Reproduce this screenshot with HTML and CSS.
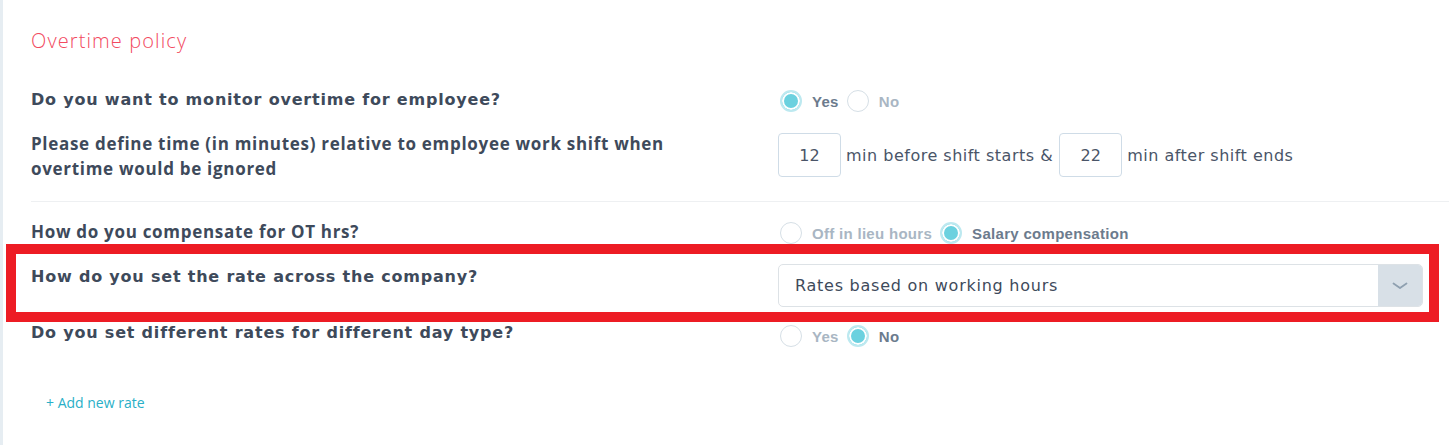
FILE: index.html
```html
<!DOCTYPE html>
<html lang="en">
<head>
<meta charset="utf-8">
<title>Overtime policy</title>
<link rel="stylesheet" href="styles.css">
</head>
<body>
<div class="page">
  <div class="strip"></div>
  <main class="panel">
    <h2 class="title">Overtime policy</h2>

    <div class="row row1">
      <div class="label">Do you want to monitor overtime for employee?</div>
      <div class="control radios">
        <span class="radio checked"></span><span class="rlabel on">Yes</span>
        <span class="radio"></span><span class="rlabel">No</span>
      </div>
    </div>

    <div class="row row2">
      <div class="label alt two">Please define time (in minutes) relative to employee work shift when overtime would be ignored</div>
      <div class="control inputs">
        <span class="box">12</span><span class="txt">min before shift starts &amp;</span>
        <span class="box">22</span><span class="txt">min after shift ends</span>
      </div>
    </div>

    <div class="sep"></div>

    <div class="row row3">
      <div class="label alt">How do you compensate for OT hrs?</div>
      <div class="control radios">
        <span class="radio"></span><span class="rlabel">Off in lieu hours</span>
        <span class="radio checked"></span><span class="rlabel on">Salary compensation</span>
      </div>
    </div>

    <div class="row row4">
      <div class="label top">How do you set the rate across the company?</div>
      <div class="control">
        <div class="select">
          <span class="seltext">Rates based on working hours</span>
          <span class="arrow"><svg width="16" height="8" viewBox="0 0 16 8"><path d="M1.5 1.5 L8 6 L14.5 1.5" fill="none" stroke="#8fa0b0" stroke-width="1.8" stroke-linecap="round" stroke-linejoin="round"/></svg></span>
        </div>
      </div>
      <div class="highlight"></div>
    </div>

    <div class="row row5">
      <div class="label">Do you set different rates for different day type?</div>
      <div class="control radios low">
        <span class="radio"></span><span class="rlabel">Yes</span>
        <span class="radio checked"></span><span class="rlabel on">No</span>
      </div>
    </div>

    <div class="add">+ Add new rate</div>
  </main>
</div>
</body>
</html>
```

FILE: styles.css
```css
html, body {
  margin: 0;
  padding: 0;
  background: #ffffff;
}
.page {
  display: flex;
  min-height: 445px;
}
.strip {
  width: 3px;
  background: #e6edf2;
  flex: none;
}
.panel {
  flex: 1;
  padding: 0 4px 0 28px;
  font-family: "DejaVu Sans", sans-serif;
  color: #3e4a5b;
}
.title {
  margin: 0;
  padding-top: 29px;
  font-family: "Open Sans", sans-serif;
  font-weight: 300;
  font-size: 20px;
  letter-spacing: 1.1px;
  line-height: 24px;
  color: #f24a60;
}
.row {
  position: relative;
  display: flex;
  align-items: center;
}
.label {
  width: 747px;
  flex: none;
  font-weight: bold;
  font-size: 16px;
  line-height: 24px;
  letter-spacing: 0.8px;
}
.label.alt {
  font-family: "Open Sans", sans-serif;
  font-weight: 700;
  font-size: 17px;
  letter-spacing: 0.7px;
}
.label.two {
  line-height: 25px;
  padding: 2px 80px 0 0;
  box-sizing: border-box;
}
.label.top {
  align-self: flex-start;
  padding-top: 1px;
}
.control {
  flex: 1;
  display: flex;
  align-items: center;
  padding-right: 26px;
}
.row1 {
  margin-top: 27px;
  height: 40px;
}
.row2 {
  margin-top: 10px;
  height: 50px;
}
.row3 {
  margin-top: 10px;
  height: 40px;
}
.row4 {
  margin-top: 12px;
  height: 43px;
}
.row5 {
  margin-top: 11px;
  height: 30px;
}
.radios {
  padding-left: 2px;
  padding-top: 2px;
}
.radios.low {
  padding-top: 6px;
}
.radio {
  width: 22px;
  height: 22px;
  box-sizing: border-box;
  border-radius: 50%;
  border: 1.5px solid #d6dfe6;
  background: #fff;
  flex: none;
}
.radio.checked {
  border: 2px solid #bde9f0;
  background: #6bd1df;
  box-shadow: inset 0 0 0 2px #ffffff;
}
.rlabel {
  font-family: "Liberation Sans", Arial, sans-serif;
  font-weight: bold;
  font-size: 15px;
  letter-spacing: 0.3px;
  color: #a9b6c3;
  margin: 0 8px 0 10px;
}
.rlabel.on {
  color: #6c7b8d;
}
.inputs .box {
  width: 63px;
  height: 44px;
  box-sizing: border-box;
  border: 1px solid #cfdce7;
  border-radius: 4px;
  display: flex;
  align-items: center;
  justify-content: center;
  font-size: 16px;
  color: #4a5568;
  flex: none;
}
.inputs .txt {
  font-size: 16px;
  letter-spacing: 0.5px;
  color: #4a5568;
  margin: 0 6px 0 5px;
}
.sep {
  margin-top: 21px;
  height: 1px;
  background: #eef0f2;
}
.select {
  flex: 1;
  height: 43px;
  box-sizing: border-box;
  border: 1px solid #dde2e6;
  border-radius: 5px;
  display: flex;
  align-items: center;
  overflow: hidden;
}
.seltext {
  flex: 1;
  padding-left: 16px;
  font-size: 16px;
  letter-spacing: 0.75px;
  color: #3e4a5b;
}
.arrow {
  width: 44px;
  height: 100%;
  background: #d8e0e7;
  display: flex;
  align-items: center;
  justify-content: center;
}
.highlight {
  position: absolute;
  left: -25px;
  right: 10px;
  top: -20px;
  bottom: -15px;
  border: 10px solid #ed1c24;
  pointer-events: none;
}
.add {
  margin-top: 45px;
  padding-left: 15px;
  font-family: "Open Sans", sans-serif;
  font-size: 14px;
  line-height: 20px;
  color: #29afc7;
}
```
